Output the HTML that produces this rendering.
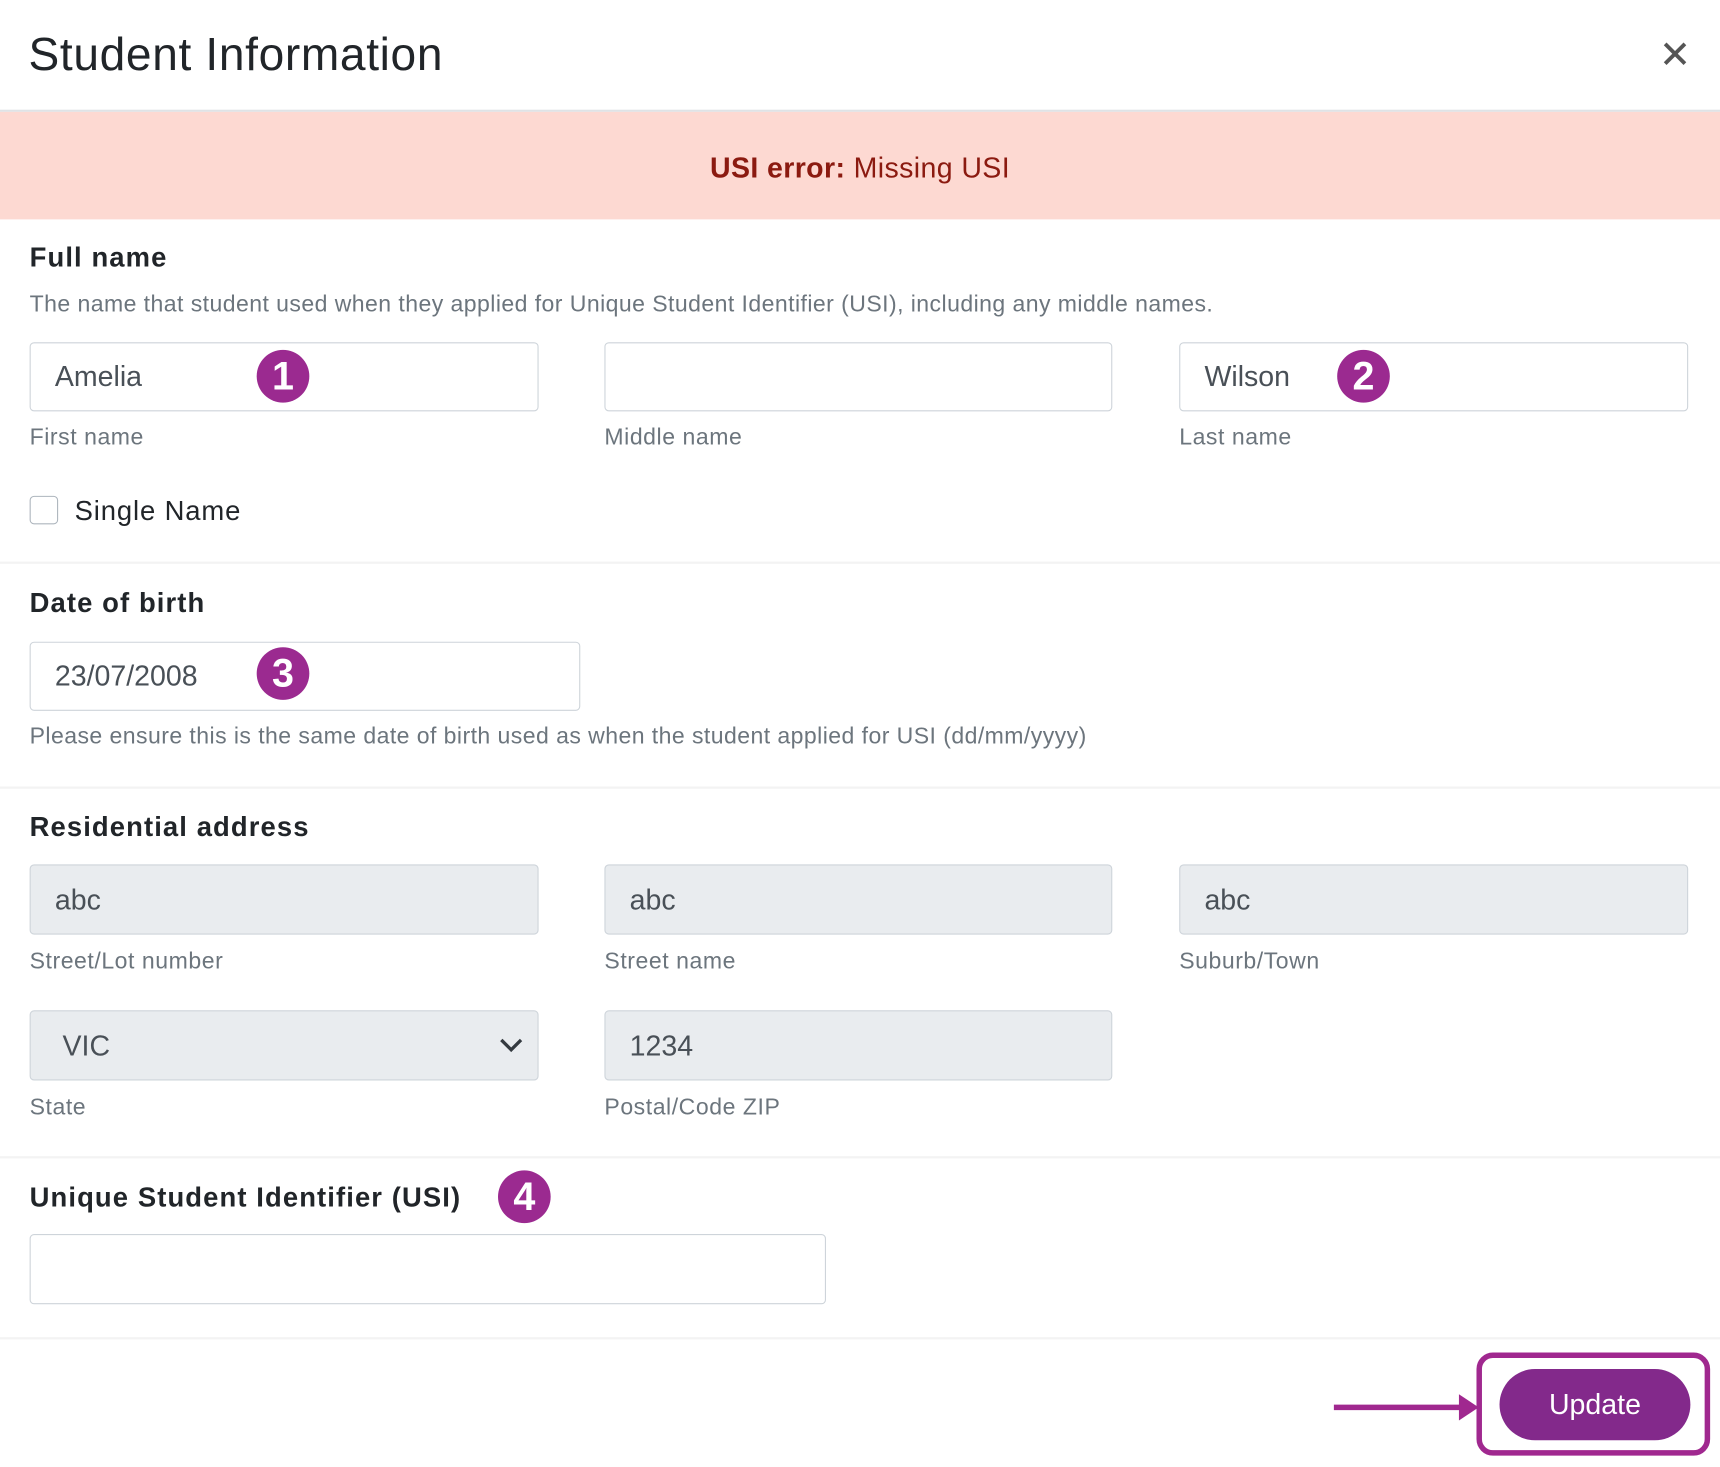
<!DOCTYPE html>
<html><head><meta charset="utf-8"><style>
*{box-sizing:border-box;margin:0;padding:0}
html,body{width:1720px;height:1466px;overflow:hidden;background:#fff}
#w{position:absolute;left:0;top:0;width:1568px;height:1337px;transform:scale(1.09694);transform-origin:0 0;font-family:"Liberation Sans",sans-serif}
.a{position:absolute;white-space:nowrap}
.t{height:40px;line-height:40px}
.h{font-weight:bold;font-size:25px;color:#212529;letter-spacing:1px}
.d{font-size:21px;color:#6c757d;letter-spacing:0.4px}
.lb{font-size:21px;color:#6c757d;letter-spacing:0.5px}
.in{position:absolute;border:1.5px solid #ced4da;border-radius:4px;background:#fff;font-size:26px;color:#495057;padding-left:22px;display:flex;align-items:center}
.g{background:#e9ecef}
.hr{position:absolute;left:0;width:1568px;height:2px;background:#f3f3f3}
.b{position:absolute;width:48px;height:48px;border-radius:50%;background:#9b2a90;color:#fff;font-weight:bold;font-size:36px;text-align:center;line-height:48px}
</style></head><body><div id="w">
<div class="a" style="left:26px;top:25px;font-size:42px;line-height:50px;color:#212529;letter-spacing:0.6px">Student Information</div>
<svg class="a" style="left:1516px;top:38px" width="22" height="22"><path d="M2 2L20 20M20 2L2 20" stroke="#555" stroke-width="3.5"/></svg>
<div class="a" style="left:0;top:100px;width:1568px;height:2px;background:#dfe3e6"></div>
<div class="a" style="left:0;top:102px;width:1568px;height:98px;background:#fdd9d2"></div>
<div class="a t" style="left:0;top:133px;width:1568px;text-align:center;font-size:26px;color:#8b1a10;letter-spacing:0.35px"><b>USI error:</b> Missing USI</div>

<div class="a t h" style="left:27px;top:215px">Full name</div>
<div class="a t d" style="left:27px;top:258px">The name that student used when they applied for Unique Student Identifier (USI), including any middle names.</div>
<div class="in" style="left:27px;top:312px;width:464px;height:63px">Amelia</div>
<div class="in" style="left:551px;top:312px;width:463px;height:63px"></div>
<div class="in" style="left:1075px;top:312px;width:464px;height:63px">Wilson</div>
<div class="b" style="left:234px;top:319px">1</div>
<div class="b" style="left:1219px;top:319px">2</div>
<div class="a t lb" style="left:27px;top:379px">First name</div>
<div class="a t lb" style="left:551px;top:379px">Middle name</div>
<div class="a t lb" style="left:1075px;top:379px">Last name</div>
<div class="a" style="left:27px;top:452px;width:26px;height:26px;border:1.5px solid #adb5bd;border-radius:4px"></div>
<div class="a t" style="left:68px;top:446px;font-size:25px;color:#212529;letter-spacing:0.8px">Single Name</div>
<div class="hr" style="top:512px"></div>

<div class="a t h" style="left:27px;top:530px">Date of birth</div>
<div class="in" style="left:27px;top:585px;width:502px;height:63px">23/07/2008</div>
<div class="b" style="left:234px;top:590px">3</div>
<div class="a t d" style="left:27px;top:652px">Please ensure this is the same date of birth used as when the student applied for USI (dd/mm/yyyy)</div>
<div class="hr" style="top:717px"></div>

<div class="a t h" style="left:27px;top:734px">Residential address</div>
<div class="in g" style="left:27px;top:788px;width:464px;height:64px">abc</div>
<div class="in g" style="left:551px;top:788px;width:463px;height:64px">abc</div>
<div class="in g" style="left:1075px;top:788px;width:464px;height:64px">abc</div>
<div class="a t lb" style="left:27px;top:857px">Street/Lot number</div>
<div class="a t lb" style="left:551px;top:857px">Street name</div>
<div class="a t lb" style="left:1075px;top:857px">Suburb/Town</div>
<div class="in g" style="left:27px;top:921px;width:464px;height:64px;padding-left:29px">VIC</div>
<svg class="a" style="left:455px;top:946px" width="22" height="14"><path d="M2 2L11 11L20 2" stroke="#343a40" stroke-width="3" fill="none"/></svg>
<div class="in g" style="left:551px;top:921px;width:463px;height:64px">1234</div>
<div class="a t lb" style="left:27px;top:990px">State</div>
<div class="a t lb" style="left:551px;top:990px">Postal/Code ZIP</div>
<div class="hr" style="top:1054px"></div>

<div class="a t h" style="left:27px;top:1072px">Unique Student Identifier (USI)</div>
<div class="b" style="left:454px;top:1067px">4</div>
<div class="in" style="left:27px;top:1125px;width:726px;height:64px"></div>
<div class="hr" style="top:1219px"></div>

<svg class="a" style="left:1214px;top:1268px" width="136" height="30"><path d="M2 15H118" stroke="#a0288f" stroke-width="5"/><path d="M116 3L134 15L116 27Z" fill="#a0288f"/></svg>
<div class="a" style="left:1346px;top:1233px;width:213px;height:94px;border:5px solid #a0288f;border-radius:15px"></div>
<div class="a" style="left:1367px;top:1248px;width:174px;height:65px;border-radius:33px;background:#83298b;color:#fff;font-size:26px;text-align:center;line-height:65px">Update</div>
</div></body></html>
